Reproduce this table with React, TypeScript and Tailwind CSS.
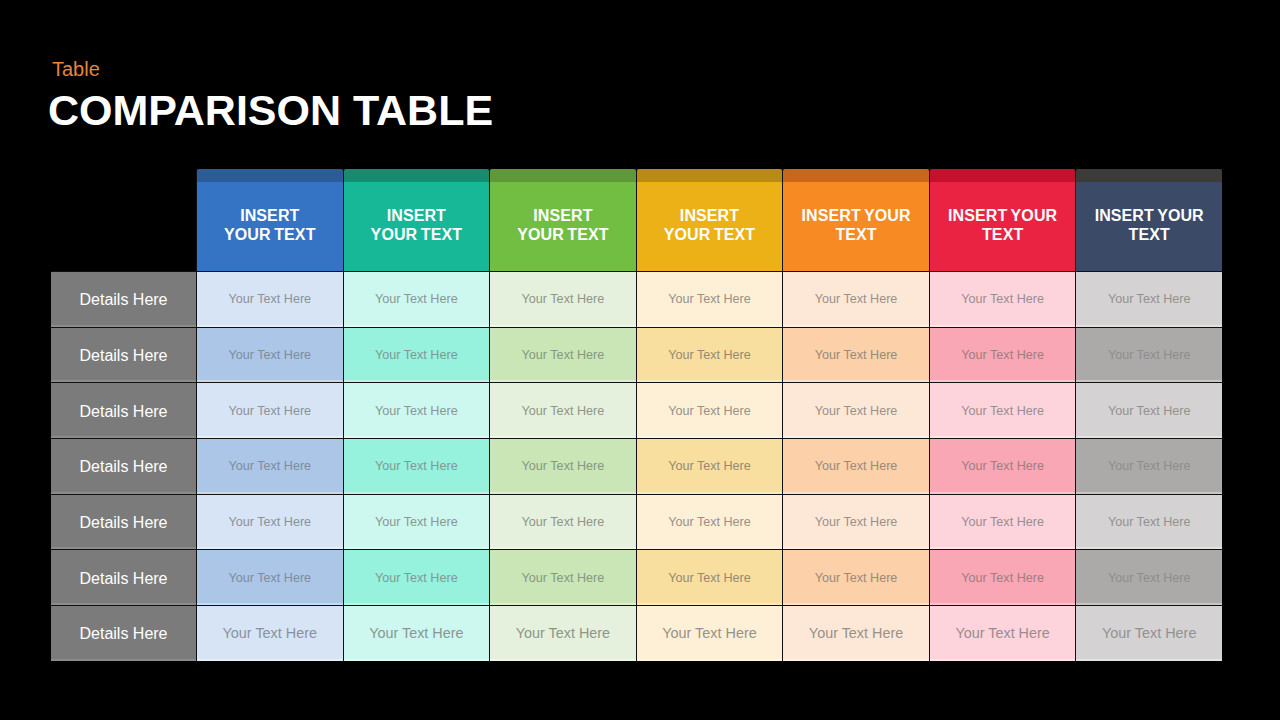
import React from "react";

const cols = [
  { strip: "bg-[#2c5c98]", head: "bg-[#3574c4]", light: "bg-[#d7e4f5]", dark: "bg-[#abc6e7]", text: "text-[#8a919c]", darkText: "text-[#7f8ba0]", lines: ["INSERT", "YOUR TEXT"] },
  { strip: "bg-[#178a6f]", head: "bg-[#17b897]", light: "bg-[#cdf8ef]", dark: "bg-[#96f1dd]", text: "text-[#8a9694]", darkText: "text-[#7f9a94]", lines: ["INSERT", "YOUR TEXT"] },
  { strip: "bg-[#5e9838]", head: "bg-[#72be43]", light: "bg-[#e5f1dc]", dark: "bg-[#cae6b6]", text: "text-[#8e958a]", darkText: "text-[#859880]", lines: ["INSERT", "YOUR TEXT"] },
  { strip: "bg-[#b88b16]", head: "bg-[#ebb117]", light: "bg-[#fdf0d6]", dark: "bg-[#f8dfa0]", text: "text-[#989189]", darkText: "text-[#948a72]", lines: ["INSERT", "YOUR TEXT"] },
  { strip: "bg-[#c8661a]", head: "bg-[#f78a22]", light: "bg-[#fde8d8]", dark: "bg-[#fcd0a8]", text: "text-[#9a908a]", darkText: "text-[#988a7c]", lines: ["INSERT YOUR", "TEXT"] },
  { strip: "bg-[#c5112d]", head: "bg-[#eb2343]", light: "bg-[#fdd4dc]", dark: "bg-[#f9a7b4]", text: "text-[#9a8c90]", darkText: "text-[#a07c84]", lines: ["INSERT YOUR", "TEXT"] },
  { strip: "bg-[#3d3a3a]", head: "bg-[#3b4a66]", light: "bg-[#d4d2d2]", dark: "bg-[#acaaa8]", text: "text-[#939191]", darkText: "text-[#8f8d8b]", lines: ["INSERT YOUR", "TEXT"] },
];

const rows = [0, 1, 2, 3, 4, 5, 6];

export default function App() {
  return (
    <div
      className="w-[1280px] h-[720px] bg-black overflow-hidden flex flex-col pl-[51px]"
      style={{ fontFamily: '"Liberation Sans", Arial, sans-serif' }}
    >
      <div className="mt-[59px] ml-[1px] text-[20px] leading-none text-[#e8843c]">Table</div>
      <div className="mt-[10px] -ml-[3px] h-[42px] text-[43px] leading-[42px] font-bold text-white">COMPARISON TABLE</div>
      <div className="mt-[38px] w-[1171px] grid grid-cols-[145px_repeat(7,1fr)] grid-rows-[102px_repeat(7,54.7px)] gap-px bg-[#111]">
        <div className="bg-black" />
        {cols.map((c, i) => (
          <div key={"h" + i} className="flex flex-col">
            <div className={`h-[13px] rounded-t-[2px] ${c.strip}`} />
            <div className={`flex-1 ${c.head} flex flex-col items-center justify-center pb-[3px] text-white font-bold text-[16px] leading-[19px] tracking-[0.1px] [word-spacing:-1px]`}>
              {c.lines.map((l, k) => (
                <div key={k}>{l}</div>
              ))}
            </div>
          </div>
        ))}
        {rows.map((r) => (
          <React.Fragment key={"r" + r}>
            <div className="bg-[#7b7b7b] flex items-center justify-center pt-[2px] text-white text-[16px] shadow-[inset_0_-2px_0_rgba(255,255,255,0.12)]">
              Details Here
            </div>
            {cols.map((c, i) => {
              const isDark = r % 2 === 1;
              const last = r === 6;
              return (
                <div
                  key={"c" + r + "-" + i}
                  className={`${isDark ? c.dark : c.light} ${isDark ? c.darkText : c.text} flex items-center justify-center pt-[1px] ${last ? "text-[14.4px]" : "text-[12.6px]"} shadow-[inset_0_-2px_0_rgba(255,255,255,0.35)]`}
                >
                  Your Text Here
                </div>
              );
            })}
          </React.Fragment>
        ))}
      </div>
    </div>
  );
}
